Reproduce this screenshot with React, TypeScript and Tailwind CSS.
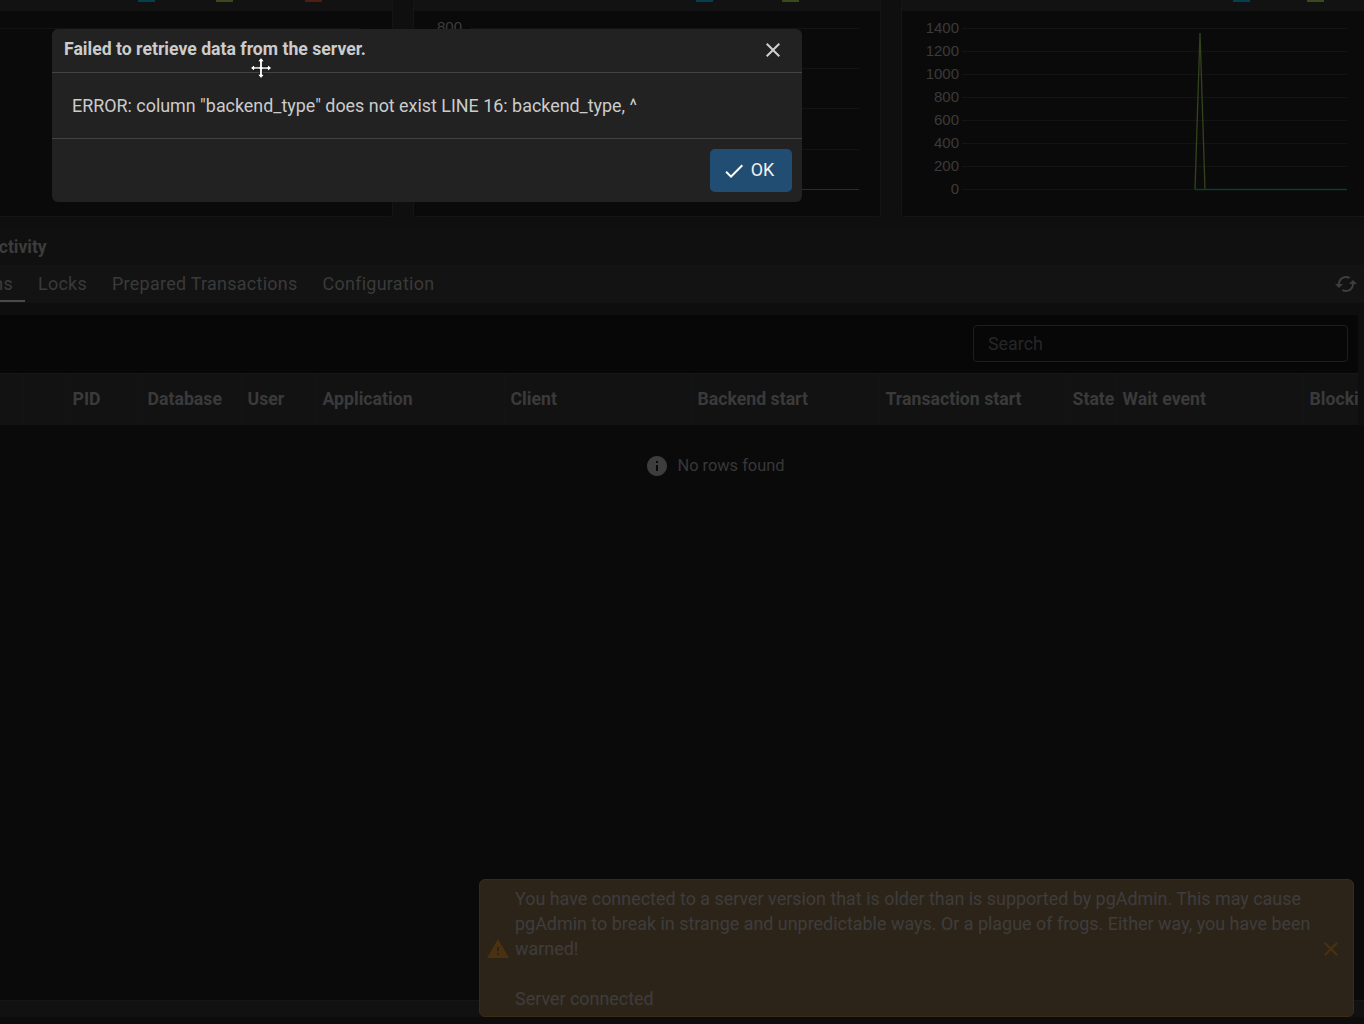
import React from 'react';
import { MdCached, MdCheck, MdClose, MdInfo, MdWarning } from 'react-icons/md';

const columns = [
  { label: '', width: 'w-[24px]' },
  { label: '', width: 'w-[43px]' },
  { label: 'PID', width: 'w-[75px]' },
  { label: 'Database', width: 'w-[100px]' },
  { label: 'User', width: 'w-[75px]' },
  { label: 'Application', width: 'w-[188px]' },
  { label: 'Client', width: 'w-[187px]' },
  { label: 'Backend start', width: 'w-[188px]' },
  { label: 'Transaction start', width: 'w-[187px]' },
  { label: 'State', width: 'w-[50px]' },
  { label: 'Wait event', width: 'w-[187px]' },
  { label: 'Blocking PIDs', width: 'w-[120px]' },
];

const yLabels = ['1400', '1200', '1000', '800', '600', '400', '200', '0'];

const App = () => {
  return (
    <div className="relative w-[1364px] h-[1024px] overflow-hidden bg-[#0e0e0e] font-['Roboto',sans-serif]">
      {/* charts row */}
      <div className="h-[228px] flex gap-5 bg-[#0f0f0f]">
        <div className="w-[393px] h-[217px] shrink-0 flex flex-col border-r border-b border-[#151515] rounded-br">
          <div className="h-[11px] bg-[#121212] flex overflow-hidden">
            <div className="ml-[138px] w-[17px] h-[2px] bg-[#04404f]" />
            <div className="ml-[61px] w-[17px] h-[2px] bg-[#3a4a1c]" />
            <div className="ml-[72px] w-[17px] h-[2px] bg-[#4f1e0d]" />
          </div>
          <div className="flex-1 bg-[#0a0a0a] pt-[17px]">
            <div className="border-t border-[#131313] h-[162px] w-[360px]" />
          </div>
        </div>

        <div className="w-[468px] h-[217px] shrink-0 flex flex-col border-x border-b border-[#151515] rounded-b">
          <div className="h-[11px] bg-[#121212] flex overflow-hidden">
            <div className="ml-[282px] w-[17px] h-[2px] bg-[#04404f]" />
            <div className="ml-[69px] w-[17px] h-[2px] bg-[#3a4a1c]" />
          </div>
          <div className="flex-1 bg-[#0a0a0a] relative pl-[23px] pt-[4px]">
            <span className="text-[15px] leading-[15px] text-[#3d3d3d] font-['Liberation_Sans',sans-serif]">800</span>
            <svg className="absolute left-0 top-0" width="466" height="205" viewBox="0 0 466 205">
              {[17, 57, 97, 138, 178].map(y => (
                <line key={y} x1="56" x2="445" y1={y + 0.5} y2={y + 0.5} stroke="#141414" />
              ))}
              <line x1="380" x2="445" y1="178.5" y2="178.5" stroke="#0f3a33" />
            </svg>
          </div>
        </div>

        <div className="w-[470px] h-[217px] shrink-0 flex flex-col border-x border-b border-[#151515] rounded-bl">
          <div className="h-[11px] bg-[#121212] flex overflow-hidden">
            <div className="ml-[331px] w-[17px] h-[2px] bg-[#04404f]" />
            <div className="ml-[57px] w-[17px] h-[2px] bg-[#3a4a1c]" />
          </div>
          <div className="flex-1 bg-[#0a0a0a] flex pt-[8px]">
            <div className="w-[57px] shrink-0 flex flex-col items-end">
              {yLabels.map(label => (
                <div
                  key={label}
                  className="h-[23px] leading-[18px] text-[15px] text-[#3a3a3a] font-['Liberation_Sans',sans-serif]"
                >
                  {label}
                </div>
              ))}
            </div>
            <svg className="ml-[3px] -mt-[8px]" width="385" height="205" viewBox="0 0 385 205">
              {[17, 40, 63, 86, 109, 132, 155, 178].map(y => (
                <line key={y} x1="0" x2="385" y1={y + 0.5} y2={y + 0.5} stroke="#141414" />
              ))}
              <polyline points="233,178.5 238,22 243,178.5" fill="none" stroke="#33431c" strokeWidth="1.3" />
              <line x1="233" x2="385" y1="178.5" y2="178.5" stroke="#0f3a33" strokeWidth="1.5" />
            </svg>
          </div>
        </div>
      </div>

      {/* activity panel */}
      <div className="h-[37px] bg-[#101010] flex items-center pt-[1px]">
        <span className="-ml-[13px] text-[17.5px] font-bold text-[#3c3c3c]">Activity</span>
      </div>
      <div className="h-[38px] bg-[#131313] flex items-center">
        <div className="relative h-full flex items-center w-[25px] overflow-hidden shrink-0 justify-end">
          <span className="text-[17.9px] tracking-[0.3px] text-[#3c3c3c] pr-[12px]">Sessions</span>
          <div className="absolute left-0 right-0 bottom-[1px] h-[2px] bg-[#4a4a4a]" />
        </div>
        <div className="ml-[13px] flex gap-[25px] text-[17.9px] tracking-[0.3px] text-[#3a3a3a]">
          <span>Locks</span>
          <span>Prepared Transactions</span>
          <span>Configuration</span>
        </div>
        <div className="ml-auto mr-[6px] text-[#3e3e3e]">
          <MdCached size={24} />
        </div>
      </div>
      <div className="h-[12px] bg-[#0e0e0e]" />
      <div className="w-[1358px] h-[59px] bg-[#070707] flex justify-end items-start pt-[10px] pr-[10px] border-b border-[#161616]">
        <div className="w-[375px] h-[37px] border border-[#1e1e1e] rounded flex items-center px-[14px] pt-[1px] text-[17.9px] text-[#262626]">
          Search
        </div>
      </div>
      <div className="w-[1358px] h-[51px] bg-[#121212] flex overflow-hidden">
        {columns.map((c, i) => (
          <div
            key={i}
            className={`${c.width} shrink-0 border-r border-[#141414] flex items-center pl-[5.5px] text-[17.7px] font-bold whitespace-nowrap text-[#3a3a3a]`}
          >
            {c.label}
          </div>
        ))}
      </div>
      <div className="h-[575px] bg-[#0a0a0a] flex justify-center pt-[30px]">
        <div className="flex items-center gap-[8px] h-[22px] text-[16.4px] text-[#383838] ml-[66px]">
          <MdInfo size={24} className="text-[#3d3d3d]" />
          <span>No rows found</span>
        </div>
      </div>
      <div className="h-[17px] bg-[#111111] border-t border-[#161616]" />
      <div className="h-[7px] bg-[#0c0c0c]" />

      {/* error dialog */}
      <div className="absolute left-[52px] top-[29px] w-[750px] h-[173px] bg-[#222222] rounded-md flex flex-col">
        <div className="h-[44px] shrink-0 border-b border-[#434343] flex items-start justify-between pl-[12px] pr-[17px]">
          <span className="mt-[9px] text-[17.65px] leading-[22px] font-bold text-[#cccccc]">
            Failed to retrieve data from the server.
          </span>
          <MdClose size={24} className="mt-[9px] text-[#d0d0d0]" />
        </div>
        <div className="h-[66px] shrink-0 border-b border-[#434343] flex items-center pl-[20px] pt-[1px] text-[17.9px] text-[#cccccc]">
          ERROR: column "backend_type" does not exist LINE 16: backend_type, ^
        </div>
        <div className="flex-1 flex justify-end items-center pr-[10px]">
          <div className="w-[82px] h-[43px] pr-[4px] bg-[#224d73] rounded-[5px] flex items-center justify-center gap-[5px] text-[17.9px] text-[#f0f0f0]">
            <MdCheck size={24} className="text-white -ml-[2px]" />
            <span>OK</span>
          </div>
        </div>
      </div>

      {/* move cursor */}
      <svg className="absolute left-[250px] top-[57px]" width="22" height="22" viewBox="0 0 22 22">
        <path
          d="M11 0.5l3.6 4.2h-2.2v5.2h5.2V7.6l4 3.4-4 3.4v-2.2h-5.2v5.2h2.2L11 21.5l-3.6-4.2h2.2v-5.2H4.4v2.2L0.5 11l3.9-3.4v2.2h5.2V4.7H7.4z"
          fill="#fff"
          stroke="#000"
          strokeWidth="0.8"
        />
      </svg>

      {/* toast */}
      <div className="absolute left-[479px] top-[879px] w-[875px] h-[138px] bg-[#2d2419] border border-[#3a2b15] rounded-md flex items-center text-[#3d3d3d]">
        <MdWarning size={24} className="ml-[6px] mt-[2px] text-[#4a3210] shrink-0" />
        <div className="ml-[5px] w-[805px] text-[17.93px] leading-[25px]">
          You have connected to a server version that is older than is supported by pgAdmin. This may cause pgAdmin to
          break in strange and unpredictable ways. Or a plague of frogs. Either way, you have been warned!
          <br />
          <br />
          Server connected
        </div>
        <MdClose size={24} className="ml-auto mr-[10px] mt-[2px] text-[#4a3210]" />
      </div>
    </div>
  );
};

export default App;
